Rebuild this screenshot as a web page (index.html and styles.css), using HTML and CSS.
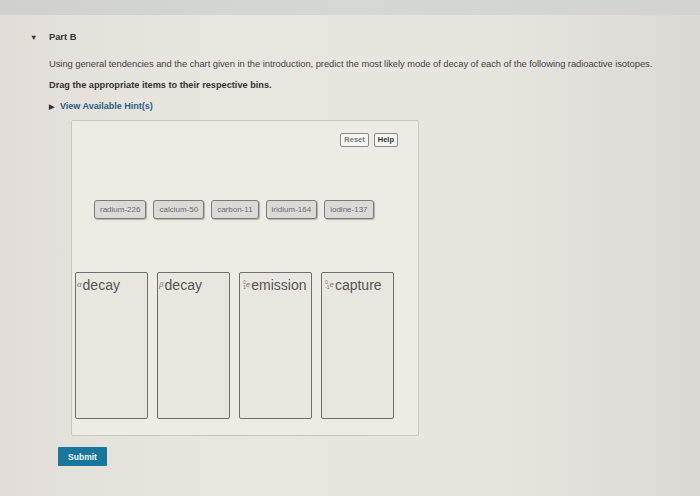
FILE: index.html
```html
<!DOCTYPE html>
<html>
<head>
<meta charset="utf-8">
<link rel="stylesheet" href="styles.css">
</head>
<body>
<div class="topband"></div>
<div class="page">
  <div class="part-header">
    <span class="caret">&#9660;</span>
    <span class="part-title">Part B</span>
  </div>
  <div class="content">
    <p class="question">Using general tendencies and the chart given in the introduction, predict the most likely mode of decay of each of the following radioactive isotopes.</p>
    <p class="instruction">Drag the appropriate items to their respective bins.</p>
    <div class="hint"><span class="hint-arrow">&#9654;</span>View Available Hint(s)</div>
    <div class="dnd">
      <div class="toolbar">
        <button class="tbtn reset">Reset</button>
        <button class="tbtn help">Help</button>
      </div>
      <div class="tiles">
        <div class="tile">radium-226</div>
        <div class="tile">calcium-50</div>
        <div class="tile">carbon-11</div>
        <div class="tile">iridium-164</div>
        <div class="tile">iodine-137</div>
      </div>
      <div class="bins">
        <div class="bin"><div class="bin-label"><span class="sym">&alpha;</span>decay</div></div>
        <div class="bin"><div class="bin-label"><span class="sym">&beta;</span>decay</div></div>
        <div class="bin"><div class="bin-label"><span class="iso"><span class="up">0</span><span class="dn">1</span></span><span class="sym">e</span>emission</div></div>
        <div class="bin"><div class="bin-label"><span class="iso"><span class="up">0</span><span class="dn">-1</span></span><span class="sym">e</span>capture</div></div>
      </div>
    </div>
    <button class="submit">Submit</button>
  </div>
</div>
</body>
</html>
```
FILE: styles.css
```css
html, body {
  margin: 0;
  padding: 0;
}
body {
  width: 700px;
  height: 496px;
  overflow: hidden;
  background: linear-gradient(90deg, #e2ddd8 0%, #e9e6e0 30%, #e8e5df 70%, #dcd8d4 100%);
  font-family: "Liberation Sans", Arial, sans-serif;
  color: #333;
}
.topband {
  height: 15px;
  background: linear-gradient(90deg, #cfd1cd 0%, #d5d8d3 50%, #d2d3cf 100%);
}
.page {
  padding-top: 15px;
}
.part-header {
  display: flex;
  align-items: center;
  height: 14px;
  padding-left: 30px;
}
.caret {
  font-size: 7.5px;
  color: #333;
  width: 19px;
}
.part-title {
  font-size: 9.3px;
  font-weight: bold;
  color: #333;
}
.content {
  padding-left: 49px;
  padding-top: 13px;
}
.question {
  margin: 0;
  font-size: 9.4px;
  line-height: 13px;
  color: #444;
  letter-spacing: -0.05px;
  white-space: nowrap;
}
.instruction {
  margin: 9px 0 0 0;
  font-size: 9.2px;
  line-height: 13px;
  font-weight: bold;
  color: #333;
}
.hint {
  margin-top: 8px;
  font-size: 9px;
  line-height: 13px;
  font-weight: bold;
  color: #2b5f84;
  display: flex;
  align-items: center;
}
.hint-arrow {
  font-size: 7px;
  color: #333;
  margin-right: 6px;
}
.dnd {
  margin-top: 7px;
  margin-left: 22px;
  width: 346px;
  height: 314px;
  border: 1px solid #c9c6c1;
  border-radius: 2px;
  background: #eeebe5;
  box-sizing: content-box;
}
.toolbar {
  display: flex;
  justify-content: flex-end;
  gap: 5px;
  padding: 12px 20px 0 0;
}
.tbtn {
  font-family: "Liberation Sans", Arial, sans-serif;
  font-size: 7.5px;
  font-weight: bold;
  padding: 0 3px;
  height: 14px;
  line-height: 12px;
  border: 1px solid #8a8a8a;
  border-radius: 2px;
  background: #f6f5f2;
  color: #555;
}
.help {
  color: #333;
}
.reset {
  color: #777;
}
.tiles {
  display: flex;
  gap: 7px;
  padding-left: 22px;
  margin-top: 53px;
}
.tile {
  height: 17px;
  line-height: 17px;
  padding: 0 5px;
  font-size: 8px;
  color: #6a6a6a;
  background: #dcdad6;
  border: 1px solid #7b7b7b;
  border-radius: 3px;
  box-shadow: 1px 1px 1px rgba(0,0,0,0.25);
  white-space: nowrap;
}
.bins {
  display: flex;
  gap: 9px;
  padding-left: 3px;
  margin-top: 53px;
}
.bin {
  width: 71px;
  height: 145px;
  border: 1px solid #6f6f6f;
  border-radius: 2px;
  background: #e9e6e0;
}
.bin-label {
  display: flex;
  align-items: center;
  font-size: 14px;
  line-height: 20px;
  color: #555;
  padding-left: 1px;
  margin-top: 2px;
}
.sym {
  font-size: 8px;
  font-style: italic;
  color: #777;
  margin-right: 1px;
}
.iso {
  display: inline-flex;
  flex-direction: column;
  font-size: 5px;
  line-height: 5px;
  color: #777;
  margin-left: 2px;
}
.submit {
  margin-top: 11px;
  margin-left: 9px;
  width: 49px;
  height: 19px;
  background: #1a779c;
  color: #eef4f6;
  border: none;
  border-radius: 1px;
  font-family: "Liberation Sans", Arial, sans-serif;
  font-size: 8.5px;
  font-weight: bold;
  padding: 0;
}
```
